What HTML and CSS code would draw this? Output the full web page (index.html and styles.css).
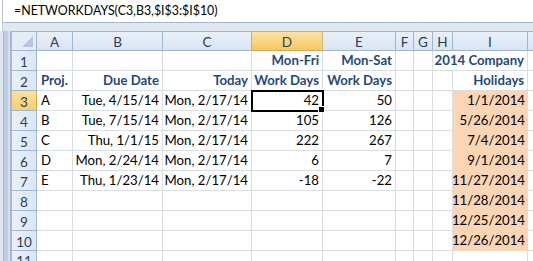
FILE: index.html
```html
<!DOCTYPE html>
<html>
<head>
<meta charset="utf-8">
<link rel="stylesheet" href="styles.css">
</head>
<body>
<div class="app">
  <div class="fbar"><span class="ftext">=NETWORKDAYS(C3,B3,$I$3:$I$10)</span></div>
  <div class="strip"></div>
  <div class="main">
    <div class="frame"></div>
    <div class="sheet">
      <!-- header row -->
      <div class="corner"><span class="tri"></span></div>
      <div class="hd">A</div><div class="hd">B</div><div class="hd">C</div><div class="hd sel">D</div><div class="hd">E</div><div class="hd">F</div><div class="hd">G</div><div class="hd">H</div><div class="hd">I</div><div class="hd last"></div>
      <!-- row 1 -->
      <div class="rh">1</div>
      <div class="c"></div><div class="c"></div><div class="c"></div><div class="c r b">Mon-Fri</div><div class="c r b">Mon-Sat</div><div class="c"></div><div class="c"></div><div class="c r b span2">2014 Company</div><div class="c last"></div>
      <!-- row 2 -->
      <div class="rh">2</div>
      <div class="c b">Proj.</div><div class="c r b">Due Date</div><div class="c r b">Today</div><div class="c r b">Work Days</div><div class="c r b">Work Days</div><div class="c"></div><div class="c"></div><div class="c"></div><div class="c r b">Holidays</div><div class="c last"></div>
      <!-- row 3 -->
      <div class="rh sel">3</div>
      <div class="c">A</div><div class="c r">Tue, 4/15/14</div><div class="c r">Mon, 2/17/14</div><div class="c r active">42</div><div class="c r">50</div><div class="c"></div><div class="c"></div><div class="c"></div><div class="c r hol">1/1/2014</div><div class="c last"></div>
      <!-- row 4 -->
      <div class="rh">4</div>
      <div class="c">B</div><div class="c r">Tue, 7/15/14</div><div class="c r">Mon, 2/17/14</div><div class="c r">105</div><div class="c r">126</div><div class="c"></div><div class="c"></div><div class="c"></div><div class="c r hol">5/26/2014</div><div class="c last"></div>
      <!-- row 5 -->
      <div class="rh">5</div>
      <div class="c">C</div><div class="c r">Thu, 1/1/15</div><div class="c r">Mon, 2/17/14</div><div class="c r">222</div><div class="c r">267</div><div class="c"></div><div class="c"></div><div class="c"></div><div class="c r hol">7/4/2014</div><div class="c last"></div>
      <!-- row 6 -->
      <div class="rh">6</div>
      <div class="c">D</div><div class="c r">Mon, 2/24/14</div><div class="c r">Mon, 2/17/14</div><div class="c r">6</div><div class="c r">7</div><div class="c"></div><div class="c"></div><div class="c"></div><div class="c r hol">9/1/2014</div><div class="c last"></div>
      <!-- row 7 -->
      <div class="rh">7</div>
      <div class="c">E</div><div class="c r">Thu, 1/23/14</div><div class="c r">Mon, 2/17/14</div><div class="c r">-18</div><div class="c r">-22</div><div class="c"></div><div class="c"></div><div class="c"></div><div class="c r hol">11/27/2014</div><div class="c last"></div>
      <!-- row 8 -->
      <div class="rh">8</div>
      <div class="c"></div><div class="c"></div><div class="c"></div><div class="c"></div><div class="c"></div><div class="c"></div><div class="c"></div><div class="c"></div><div class="c r hol">11/28/2014</div><div class="c last"></div>
      <!-- row 9 -->
      <div class="rh">9</div>
      <div class="c"></div><div class="c"></div><div class="c"></div><div class="c"></div><div class="c"></div><div class="c"></div><div class="c"></div><div class="c"></div><div class="c r hol">12/25/2014</div><div class="c last"></div>
      <!-- row 10 -->
      <div class="rh">10</div>
      <div class="c"></div><div class="c"></div><div class="c"></div><div class="c"></div><div class="c"></div><div class="c"></div><div class="c"></div><div class="c"></div><div class="c r hol">12/26/2014</div><div class="c last"></div>
      <!-- row 11 -->
      <div class="rh">11</div>
      <div class="c"></div><div class="c"></div><div class="c"></div><div class="c"></div><div class="c"></div><div class="c"></div><div class="c"></div><div class="c"></div><div class="c"></div><div class="c last"></div>
    </div>
  </div>
</div>
</body>
</html>
```
FILE: styles.css
```css
* { box-sizing: border-box; }
html, body { margin: 0; padding: 0; background: #fff; }
body { width: 533px; height: 261px; overflow: hidden; font-family: Lato, "Liberation Sans", sans-serif; font-size: 13.2px; color: #000; }

.app { width: 533px; height: 261px; display: flex; flex-direction: column; }

.fbar {
  height: 23px;
  background: #fff;
  border-left: 1px solid #b8c4d4;
  margin-left: 2px;
  border-bottom: 1px solid #a9b9cf;
  display: flex;
  align-items: center;
  padding-left: 11px;
}
.ftext { font-size: 12.4px; line-height: 1; padding-top: 1px; }

.strip {
  height: 8px;
  background: #e1e7f0;
  border-left: 1px solid #c3cedd;
  margin-left: 2px;
}

.main { flex: 1; display: flex; min-height: 0; background: #e1e7f0; }

.frame {
  width: 11px;
  background:
    linear-gradient(90deg, transparent 0 3px, #a4b5cc 3px 4px, #bfcee3 4px 8px, #d5dfec 8px 10px, #a9bad2 10px 11px);
}

.sheet {
  flex: 1;
  display: grid;
  grid-template-columns: 26px 36px 90px 89px 71px 73px 18px 19px 20px 75px 1fr;
  grid-template-rows: repeat(11, 20px) 1fr;
  background: #fff;
  overflow: hidden;
}

.corner {
  background: #e4ecf7;
  border: 1px solid #9eb6ce;
  position: relative;
}
.tri {
  position: absolute;
  right: 3px;
  bottom: 3px;
  width: 0;
  height: 0;
  border-left: 11px solid transparent;
  border-bottom: 11px solid #b4c5dc;
}

.hd {
  background: linear-gradient(#e9f0f9, #dae5f3);
  border-right: 1px solid #9eb6ce;
  border-bottom: 1px solid #9eb6ce;
  border-top: 1px solid #9eb6ce;
  display: flex;
  align-items: center;
  justify-content: center;
  color: #2b3f5c;
  font-size: 13.5px;
  padding-top: 1px;
}
.hd.sel {
  background: linear-gradient(#fbe2a8, #f5c862);
  border-bottom-color: #e9a33d;
  border-right-color: #dcb36e;
}
.hd.last { border-right: none; }

.rh {
  background: linear-gradient(90deg, #e9f0f9, #dce6f4);
  border-right: 1px solid #9eb6ce;
  border-bottom: 1px solid #9eb6ce;
  border-left: 1px solid #9eb6ce;
  display: flex;
  align-items: center;
  justify-content: center;
  color: #2b3f5c;
  font-size: 13.5px;
  padding-top: 2px;
}
.rh.sel {
  background: linear-gradient(#fbe0a0, #f8d06c);
  border-right-color: #e9a33d;
}

.c {
  border-right: 1px solid #d9dde4;
  border-bottom: 1px solid #d9dde4;
  display: flex;
  align-items: flex-end;
  padding: 0 3px 1px 4px;
  white-space: nowrap;
  line-height: 17px;
}
.c.r { justify-content: flex-end; }
.c.b { font-weight: bold; color: #1f497d; }
.c.span2 { grid-column: span 2; }
.c.last { border-right: none; }
.c.hol { background: #fcd5b4; border-bottom-color: #fcd5b4; padding-right: 2px; }
.c.active {
  position: relative;
  outline: 2px solid #000;
  outline-offset: -1px;
  z-index: 1;
}
.c.active::after {
  content: "";
  position: absolute;
  right: -3px;
  bottom: -3px;
  width: 5px;
  height: 5px;
  background: #000;
  border: 1px solid #fff;
}
```
